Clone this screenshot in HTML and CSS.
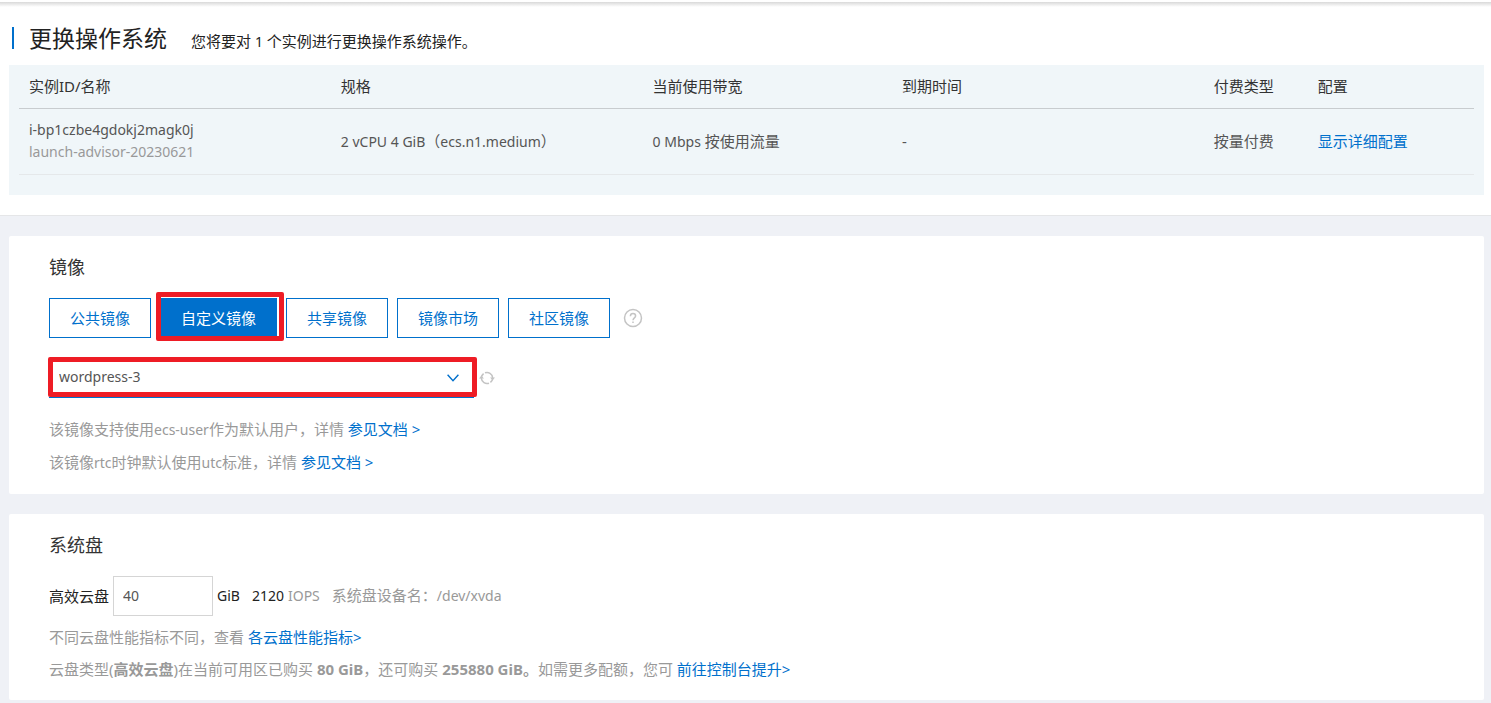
FILE: index.html
```html
<!DOCTYPE html>
<html lang="zh-CN">
<head>
    <meta charset="UTF-8">
    <meta name="viewport" content="width=device-width, initial-scale=1.0">
    <title>更换操作系统</title>
    <link rel="stylesheet" href="styles.css">
</head>
<body>
    <header class="page-header">
        <div class="title-row">
            <h1>更换操作系统</h1>
            <p>您将要对 <span class="latin">1</span> 个实例进行更换操作系统操作。</p>
        </div>
        <div class="instance-box">
            <table class="instance-table">
                <colgroup>
                    <col class="col-wide">
                    <col class="col-wide">
                    <col class="col-mid">
                    <col class="col-wide">
                    <col class="col-narrow">
                    <col>
                </colgroup>
                <thead>
                    <tr>
                        <th>实例ID/名称</th>
                        <th>规格</th>
                        <th>当前使用带宽</th>
                        <th>到期时间</th>
                        <th>付费类型</th>
                        <th>配置</th>
                    </tr>
                </thead>
                <tbody>
                    <tr>
                        <td>
                            <div class="latin">i-bp1czbe4gdokj2magk0j</div>
                            <div class="latin muted">launch-advisor-20230621</div>
                        </td>
                        <td><span class="latin">2 vCPU 4 GiB</span>（<span class="latin">ecs.n1.medium</span>）</td>
                        <td><span class="latin">0 Mbps</span> 按使用流量</td>
                        <td>-</td>
                        <td>按量付费</td>
                        <td><a href="#">显示详细配置</a></td>
                    </tr>
                </tbody>
            </table>
        </div>
    </header>

    <main>
        <section class="card">
            <h2>镜像</h2>
            <div class="image-types">
                <button type="button">公共镜像</button>
                <button type="button" class="active">自定义镜像</button>
                <button type="button">共享镜像</button>
                <button type="button">镜像市场</button>
                <button type="button">社区镜像</button>
                <svg class="help-icon" width="20" height="20" viewBox="0 0 20 20" fill="none" stroke="#c4c4c4" stroke-width="1.5">
                    <circle cx="10" cy="10" r="8.5"/>
                    <path d="M7.4 8.2c0-1.6 1.1-2.7 2.6-2.7s2.6 1 2.6 2.5c0 1.9-2.6 2-2.6 4.2M10 13.4v1.7"/>
                </svg>
            </div>
            <div class="select-row">
                <div class="select-wrap">
                    <select aria-label="镜像">
                        <option>wordpress-3</option>
                    </select>
                    <svg class="chevron" width="12" height="8" viewBox="0 0 12 8" fill="none" stroke="#0070cc" stroke-width="1.4">
                        <path d="M0.6 0.8 6 6.8 11.4 0.8"/>
                    </svg>
                </div>
                <svg width="16" height="16" viewBox="0 0 16 16" fill="none" stroke="#c4c4c4" stroke-width="1.5">
                    <path d="M2.4 8.6A5.6 5.6 0 0 1 4.6 3.6M6 2.8A5.6 5.6 0 0 1 13.6 7.6M13.6 7.4A5.6 5.6 0 0 1 11.4 12.4M10 13.2A5.6 5.6 0 0 1 2.4 8.4"/>
                    <path d="M0 8.6 2.4 5.8 5 8.6zM11 7.4h5l-2.4 2.8z" fill="#c4c4c4" stroke="none"/>
                </svg>
            </div>
            <p class="hint">该镜像支持使用<span class="latin">ecs-user</span>作为默认用户，详情 <a href="#">参见文档 &gt;</a></p>
            <p class="hint">该镜像<span class="latin">rtc</span>时钟默认使用<span class="latin">utc</span>标准，详情 <a href="#">参见文档 &gt;</a></p>
        </section>

        <section class="card">
            <h2>系统盘</h2>
            <div class="disk-row">
                <label for="diskSize">高效云盘</label>
                <input type="text" id="diskSize" value="40">
                <span class="latin unit">GiB</span>
                <span class="latin">2120</span>
                <span class="latin iops">IOPS</span>
                <span class="device">系统盘设备名：<span class="latin">/dev/xvda</span></span>
            </div>
            <p class="hint">不同云盘性能指标不同，查看 <a href="#">各云盘性能指标&gt;</a></p>
            <p class="hint">云盘类型(<b>高效云盘</b>)在当前可用区已购买 <b>80 GiB</b>，还可购买 <b>255880 GiB。</b>如需更多配额，您可 <a href="#">前往控制台提升&gt;</a></p>
        </section>
    </main>
</body>
</html>
```

FILE: styles.css
```css
* {
    box-sizing: border-box;
}
body {
    margin: 0;
    background-color: #eff1f6;
    color: #222;
    font-family: "Noto Sans", "Noto Sans CJK SC", sans-serif;
    font-size: 15px;
    line-height: 22px;
}
h1, h2, p {
    margin: 0;
    font-weight: normal;
}
a {
    color: #0070cc;
    text-decoration: none;
}
a:hover {
    text-decoration: underline;
}
.latin {
    font-size: 14px;
}

/* header */
.page-header {
    padding: 22px 7px 20px 9px;
    background: linear-gradient(#fff 2px, #d9d9d9 2px, #fff 7px);
    border-bottom: 1px solid #e5e6e8;
}
.title-row {
    display: flex;
    align-items: center;
    gap: 24px;
    padding: 0 0 11px 3px;
}
.title-row p {
    padding-top: 6px;
}
h1 {
    display: flex;
    align-items: center;
    gap: 15px;
    font-size: 23px;
    line-height: 32px;
}
h1::before {
    content: "";
    width: 2px;
    height: 22px;
    background-color: #0070cc;
}
.instance-box {
    padding: 0 10px 20px;
    background-color: #f0f6f9;
}
.instance-table {
    width: 100%;
    table-layout: fixed;
    border-collapse: collapse;
}
.col-wide {
    width: 21.43%;
}
.col-mid {
    width: 17.14%;
}
.col-narrow {
    width: 7.14%;
}
th, td {
    padding: 10px;
    text-align: left;
}
th {
    height: 43px;
    color: #333;
    font-weight: normal;
    border-bottom: 1px solid #c8cccf;
}
td {
    height: 66px;
    color: #555;
    border-bottom: 1px solid #e5e8ea;
}
.muted {
    color: #999;
}

/* cards */
.card {
    margin: 20px 7px 0 9px;
    padding: 20px 40px;
    background-color: #fff;
    border-radius: 2px;
}
h2 {
    color: #333;
    font-size: 18px;
    line-height: 22px;
}
.image-types {
    display: flex;
    align-items: center;
    gap: 9px;
    margin: 20px 0;
}
.image-types button {
    position: relative;
    height: 40px;
    padding: 0 20px;
    border: 1px solid #0070cc;
    background-color: #fff;
    color: #0070cc;
    font: inherit;
    cursor: pointer;
}
.image-types .active {
    background-color: #0070cc;
    color: #fff;
}
.image-types .active::after,
.select-wrap::after {
    content: "";
    position: absolute;
    border: 5px solid #ee1c25;
    border-radius: 2px;
    pointer-events: none;
}
.image-types .active::after {
    inset: -7px -8px -4px -5px;
}
.help-icon {
    margin-left: 4px;
}
.select-row {
    display: flex;
    align-items: center;
    gap: 5px;
    margin-bottom: 20px;
}
.select-wrap {
    position: relative;
    width: 425px;
}
.select-wrap::after {
    inset: -1px -3px 1px -1px;
}
.select-wrap select {
    display: block;
    width: 100%;
    height: 40px;
    padding: 0 10px;
    border: 0;
    border-bottom: 1px solid #0070cc;
    background-color: #fff;
    color: #555;
    font: inherit;
    font-size: 14px;
    appearance: none;
}
.chevron {
    position: absolute;
    top: 16px;
    right: 15px;
}
.hint {
    margin-bottom: 10px;
    color: #999;
}
.hint:last-child {
    margin-bottom: 0;
}

.disk-row {
    display: flex;
    align-items: center;
    gap: 4px;
    margin: 20px 0 10px;
}
.disk-row input {
    width: 100px;
    height: 40px;
    padding: 0 9px;
    border: 1px solid #d5d5d5;
    color: #555;
    font: inherit;
    font-size: 14px;
}
.unit {
    margin-right: 8px;
}
.iops, .device {
    color: #999;
}
.device {
    margin-left: 8px;
}
```
